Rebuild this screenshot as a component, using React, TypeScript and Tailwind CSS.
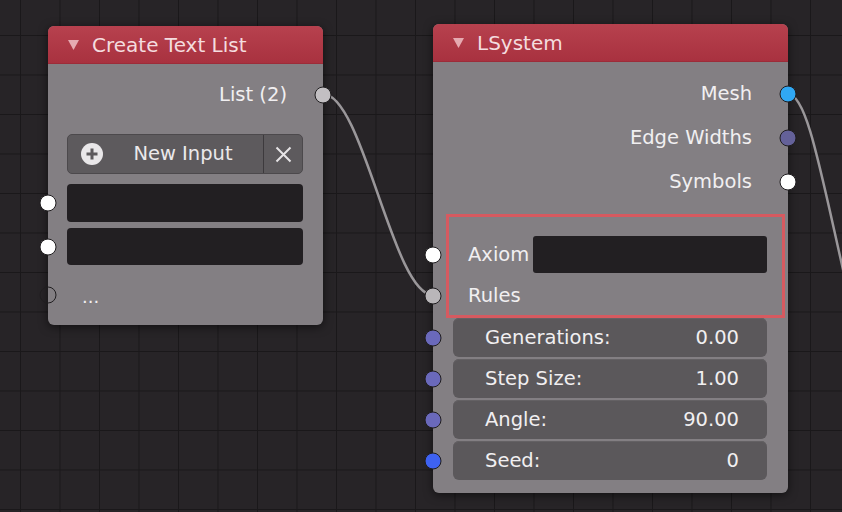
import type { ReactNode } from "react"

type SocketProps = {
  fill: string
  side: "left" | "right"
  hollow?: boolean
  offset?: string
}

function Socket({ fill, side, hollow, offset }: SocketProps) {
  const pos = offset ?? (side === "left" ? "left-0 -translate-x-1/2" : "right-0 translate-x-1/2")
  return (
    <span
      className={`absolute top-1/2 -translate-y-1/2 ${pos} h-[17px] w-[17px] rounded-full border border-[#1f1d1f] ${hollow ? "bg-transparent" : ""}`}
      style={hollow ? undefined : { backgroundColor: fill }}
    />
  )
}

function Header({ title }: { title: string }) {
  return (
    <div className="flex h-[38px] items-center rounded-t-[6px] bg-linear-to-b from-[#b7414e] to-[#a8313f] pl-[20px] shadow-[inset_0_-1px_0_#9c2c39]">
      <svg width="11" height="10" viewBox="0 0 11 10" className="shrink-0">
        <polygon points="0,0 11,0 5.5,10" fill="#e6aab1" />
      </svg>
      <span className="ml-[13px] text-[20px] leading-none text-[#f4dcdf]">{title}</span>
    </div>
  )
}

function NodeFrame({ pos, title, children }: { pos: string; title: string; children: ReactNode }) {
  return (
    <div className={`absolute ${pos} rounded-[6px] bg-[#837f83] shadow-[0_2px_10px_rgba(0,0,0,0.55)]`}>
      <Header title={title} />
      {children}
    </div>
  )
}

function OutputRow({ label, fill }: { label: string; fill: string }) {
  return (
    <div className="relative flex h-[44px] items-center justify-end pr-[36px]">
      <span>{label}</span>
      <Socket fill={fill} side="right" />
    </div>
  )
}

function ValueRow({ label, value, fill }: { label: string; value: string; fill: string }) {
  return (
    <div className="relative">
      <div className="ml-[20px] mr-[21px] flex h-[39px] items-center justify-between rounded-[6px] bg-[#5b585b] pl-[32px] pr-[28px] shadow-[inset_0_1px_0_#646164]">
        <span>{label}</span>
        <span>{value}</span>
      </div>
      <Socket fill={fill} side="left" />
    </div>
  )
}

function CreateTextList() {
  return (
    <NodeFrame pos="left-[48px] top-[26px] w-[275px]" title="Create Text List">
      <div className="pb-[15px] pt-[11px]">
        <div className="relative flex h-[40px] items-center justify-end pr-[36px]">
          <span>List (2)</span>
          <Socket fill="#c2bfc2" side="right" />
        </div>
        <div className="ml-[19px] mr-[20px] mt-[19px] flex h-[40px] rounded-[5px] border border-[#4c494c] bg-[#5d5a5d]">
          <div className="flex flex-1 items-center pl-[13px]">
            <svg width="22" height="22" viewBox="0 0 22 22" className="shrink-0">
              <circle cx="11" cy="11" r="11" fill="#e9e7e9" />
              <path d="M11 5.5v11M5.5 11h11" stroke="#5d5a5d" strokeWidth="3" />
            </svg>
            <span className="flex-1 text-center text-[#ebe9eb]">New Input</span>
          </div>
          <div className="flex w-[39px] items-center justify-center border-l border-[#3d3a3d]">
            <svg width="17" height="17" viewBox="0 0 17 17">
              <path d="M1.5 1.5l14 14M15.5 1.5l-14 14" stroke="#e6e4e6" strokeWidth="2" />
            </svg>
          </div>
        </div>
        <div className="relative mt-[10px]">
          <div className="ml-[19px] mr-[20px] h-[38px] rounded-[4px] bg-[#221f22]" />
          <Socket fill="#ffffff" side="left" />
        </div>
        <div className="relative mt-[6px]">
          <div className="ml-[19px] mr-[20px] h-[37px] rounded-[4px] bg-[#221f22]" />
          <Socket fill="#ffffff" side="left" />
        </div>
        <div className="relative mt-[15px] flex h-[30px] items-center pl-[34px]">
          <span className="pt-[4px] text-[18px] leading-none">...</span>
          <Socket fill="transparent" side="left" hollow />
        </div>
      </div>
    </NodeFrame>
  )
}

function LSystem() {
  return (
    <NodeFrame pos="left-[433px] top-[24px] w-[355px]" title="LSystem">
      <div className="pb-[13px] pt-[10px]">
        <OutputRow label="Mesh" fill="#30a8f4" />
        <OutputRow label="Edge Widths" fill="#646199" />
        <OutputRow label="Symbols" fill="#ffffff" />
        <div className="ml-[13px] mr-[3px] mt-[10px] border-[3px] border-[#d65a60] pl-[19px] pr-[15px] pt-[19px]">
          <div className="relative flex h-[37px] items-center">
            <span>Axiom</span>
            <div className="ml-[4px] h-full flex-1 rounded-[3px] bg-[#221f22]" />
            <Socket fill="#ffffff" side="left" offset="left-[-35px] -translate-x-1/2" />
          </div>
          <div className="relative mt-[4px] flex h-[38px] items-center">
            <span>Rules</span>
            <Socket fill="#b9b6b9" side="left" offset="left-[-35px] -translate-x-1/2" />
          </div>
        </div>
        <div className="flex flex-col gap-[2px]">
          <ValueRow label="Generations:" value="0.00" fill="#6a69bb" />
          <ValueRow label="Step Size:" value="1.00" fill="#6a69bb" />
          <ValueRow label="Angle:" value="90.00" fill="#6a69bb" />
          <ValueRow label="Seed:" value="0" fill="#3e62f2" />
        </div>
      </div>
    </NodeFrame>
  )
}

export default function App() {
  return (
    <div className="relative h-[512px] w-[842px] overflow-hidden bg-[#272427] bg-[linear-gradient(to_right,#1a181a_1px,transparent_1px),linear-gradient(to_bottom,#1a181a_1px,transparent_1px)] bg-[size:39.5px_39.5px] bg-[position:20px_35px] font-['DejaVu_Sans',sans-serif] text-[19.5px] text-[#f1eff1]">
      <svg className="absolute inset-0" width="842" height="512" viewBox="0 0 842 512">
        <path d="M323 94 C363 94 393 295 433 295" fill="none" stroke="#9a979a" strokeWidth="2.5" />
        <path d="M788 94 C808 94 822 180 850 300" fill="none" stroke="#9a979a" strokeWidth="2.5" />
      </svg>
      <CreateTextList />
      <LSystem />
    </div>
  )
}
